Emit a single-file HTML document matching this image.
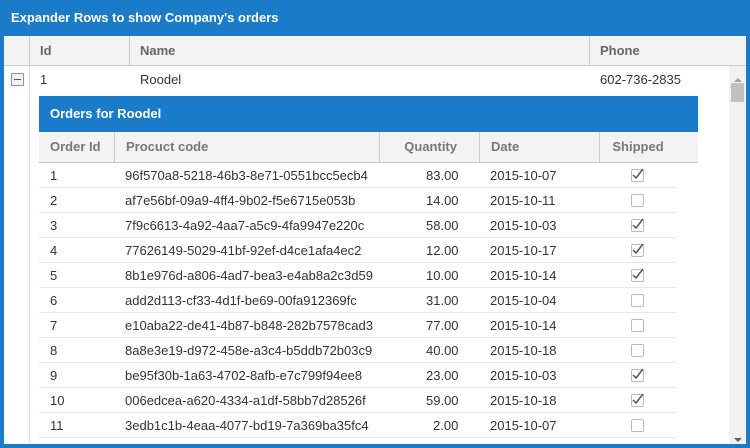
<!DOCTYPE html>
<html><head><style>
*{box-sizing:border-box;margin:0;padding:0}
body{width:750px;height:448px;overflow:hidden;background:#fff;font-family:"Liberation Sans",Arial,sans-serif;font-size:13px;color:#333}
.frame{position:absolute;left:0;top:0;width:750px;height:448px;background:#1a7cc9}
.title{position:absolute;left:11px;top:10px;color:#fff;font-weight:bold;font-size:13px}
.inner{position:absolute;left:4px;top:36px;width:742px;height:408px;background:#fff;overflow:hidden}
.hdr{position:absolute;left:0;top:0;width:742px;height:30px;background:#f3f3f3;border-bottom:1px solid #ccc}
.hc{position:absolute;top:0;height:29px;line-height:29px;color:#666;font-weight:bold;border-left:1px solid #ccc;padding-left:10px}
.vline{position:absolute;left:25px;top:30px;width:1px;height:380px;background:#ddd}
.sb{position:absolute;left:725px;top:30px;width:17px;height:378px;background:#f1f1f1}
.thumb{position:absolute;left:727px;top:47px;width:13px;height:19px;background:#c1c1c1}
.abs{position:absolute}
.nt{position:absolute;left:35px;top:60px;width:659px;height:36px;background:#1a7cc9;color:#fff;font-weight:bold;line-height:36px;padding-left:11px}
.nh{position:absolute;left:35px;top:96px;width:659px;height:31px;background:#f3f3f3;border-bottom:1px solid #ccc}
.nhc{position:absolute;top:0;height:30px;line-height:30px;color:#777;font-weight:bold;padding-left:11px}
.row{position:absolute;left:35px;width:637px;height:25px;border-bottom:1px solid #e8e8e8;line-height:25px}
.row span{position:absolute}
.cb{position:absolute;left:592px;top:6px;width:13px;height:13px;border:1px solid #bbb;border-radius:2px;background:#fff}
</style></head><body>
<div class="frame"><div class="title">Expander Rows to show Company's orders</div></div>
<div class="inner">
 <div class="hdr">
  <div class="hc" style="left:25px;width:100px">Id</div>
  <div class="hc" style="left:125px;width:460px">Name</div>
  <div class="hc" style="left:585px;width:157px">Phone</div>
 </div>
 <div class="vline"></div>
 <div class="abs" style="left:7px;top:37px;width:13px;height:13px;border:1px solid #7a9ab8;background:#eef2f6"><div style="position:absolute;left:2px;top:5px;width:7px;height:1px;background:#555"></div></div>
 <div class="abs" style="left:36px;top:36px">1</div>
 <div class="abs" style="left:136px;top:36px">Roodel</div>
 <div class="abs" style="left:596px;top:36px">602-736-2835</div>
 <div class="sb"></div>
 <div class="abs" style="left:730px;top:42px;width:0;height:0;border-left:4px solid transparent;border-right:4px solid transparent;border-bottom:4px solid #a0a0a0"></div>
 <div class="thumb"></div>
 <div class="abs" style="left:730px;top:402px;width:0;height:0;border-left:4px solid transparent;border-right:4px solid transparent;border-top:4px solid #606060"></div>
 <div class="nt">Orders for Roodel</div>
 <div class="nh">
  <div class="nhc" style="left:0;width:75px">Order Id</div>
  <div class="nhc" style="left:75px;width:265px;border-left:1px solid #ccc">Procuct code</div>
  <div class="nhc" style="left:340px;width:100px;border-left:1px solid #ccc;text-align:right;padding-right:22px">Quantity</div>
  <div class="nhc" style="left:440px;width:120px;border-left:1px solid #ccc">Date</div>
  <div class="nhc" style="left:560px;width:99px;border-left:1px solid #ccc;text-align:center;padding-left:0;padding-right:22px">Shipped</div>
 </div>
</div>
<div class="inner" style="background:transparent;pointer-events:none">
<div class="row" style="top:127px"><span style="left:11px">1</span><span style="left:86px">96f570a8-5218-46b3-8e71-0551bcc5ecb4</span><span style="left:387px">83.00</span><span style="left:451px">2015-10-07</span><div class="cb"><svg width="13" height="13" style="position:absolute;left:-1px;top:-3px"><path d="M2 8 L5 11 L12 2" stroke="#555" stroke-width="1.5" fill="none"/></svg></div></div>
<div class="row" style="top:152px"><span style="left:11px">2</span><span style="left:86px">af7e56bf-09a9-4ff4-9b02-f5e6715e053b</span><span style="left:387px">14.00</span><span style="left:451px">2015-10-11</span><div class="cb"></div></div>
<div class="row" style="top:177px"><span style="left:11px">3</span><span style="left:86px">7f9c6613-4a92-4aa7-a5c9-4fa9947e220c</span><span style="left:387px">58.00</span><span style="left:451px">2015-10-03</span><div class="cb"><svg width="13" height="13" style="position:absolute;left:-1px;top:-3px"><path d="M2 8 L5 11 L12 2" stroke="#555" stroke-width="1.5" fill="none"/></svg></div></div>
<div class="row" style="top:202px"><span style="left:11px">4</span><span style="left:86px">77626149-5029-41bf-92ef-d4ce1afa4ec2</span><span style="left:387px">12.00</span><span style="left:451px">2015-10-17</span><div class="cb"><svg width="13" height="13" style="position:absolute;left:-1px;top:-3px"><path d="M2 8 L5 11 L12 2" stroke="#555" stroke-width="1.5" fill="none"/></svg></div></div>
<div class="row" style="top:227px"><span style="left:11px">5</span><span style="left:86px">8b1e976d-a806-4ad7-bea3-e4ab8a2c3d59</span><span style="left:387px">10.00</span><span style="left:451px">2015-10-14</span><div class="cb"><svg width="13" height="13" style="position:absolute;left:-1px;top:-3px"><path d="M2 8 L5 11 L12 2" stroke="#555" stroke-width="1.5" fill="none"/></svg></div></div>
<div class="row" style="top:252px"><span style="left:11px">6</span><span style="left:86px">add2d113-cf33-4d1f-be69-00fa912369fc</span><span style="left:387px">31.00</span><span style="left:451px">2015-10-04</span><div class="cb"></div></div>
<div class="row" style="top:277px"><span style="left:11px">7</span><span style="left:86px">e10aba22-de41-4b87-b848-282b7578cad3</span><span style="left:387px">77.00</span><span style="left:451px">2015-10-14</span><div class="cb"></div></div>
<div class="row" style="top:302px"><span style="left:11px">8</span><span style="left:86px">8a8e3e19-d972-458e-a3c4-b5ddb72b03c9</span><span style="left:387px">40.00</span><span style="left:451px">2015-10-18</span><div class="cb"></div></div>
<div class="row" style="top:327px"><span style="left:11px">9</span><span style="left:86px">be95f30b-1a63-4702-8afb-e7c799f94ee8</span><span style="left:387px">23.00</span><span style="left:451px">2015-10-03</span><div class="cb"><svg width="13" height="13" style="position:absolute;left:-1px;top:-3px"><path d="M2 8 L5 11 L12 2" stroke="#555" stroke-width="1.5" fill="none"/></svg></div></div>
<div class="row" style="top:352px"><span style="left:11px">10</span><span style="left:86px">006edcea-a620-4334-a1df-58bb7d28526f</span><span style="left:387px">59.00</span><span style="left:451px">2015-10-18</span><div class="cb"><svg width="13" height="13" style="position:absolute;left:-1px;top:-3px"><path d="M2 8 L5 11 L12 2" stroke="#555" stroke-width="1.5" fill="none"/></svg></div></div>
<div class="row" style="top:377px"><span style="left:11px">11</span><span style="left:86px">3edb1c1b-4eaa-4077-bd19-7a369ba35fc4</span><span style="left:394px">2.00</span><span style="left:451px">2015-10-07</span><div class="cb"></div></div>
</div>
</body></html>
